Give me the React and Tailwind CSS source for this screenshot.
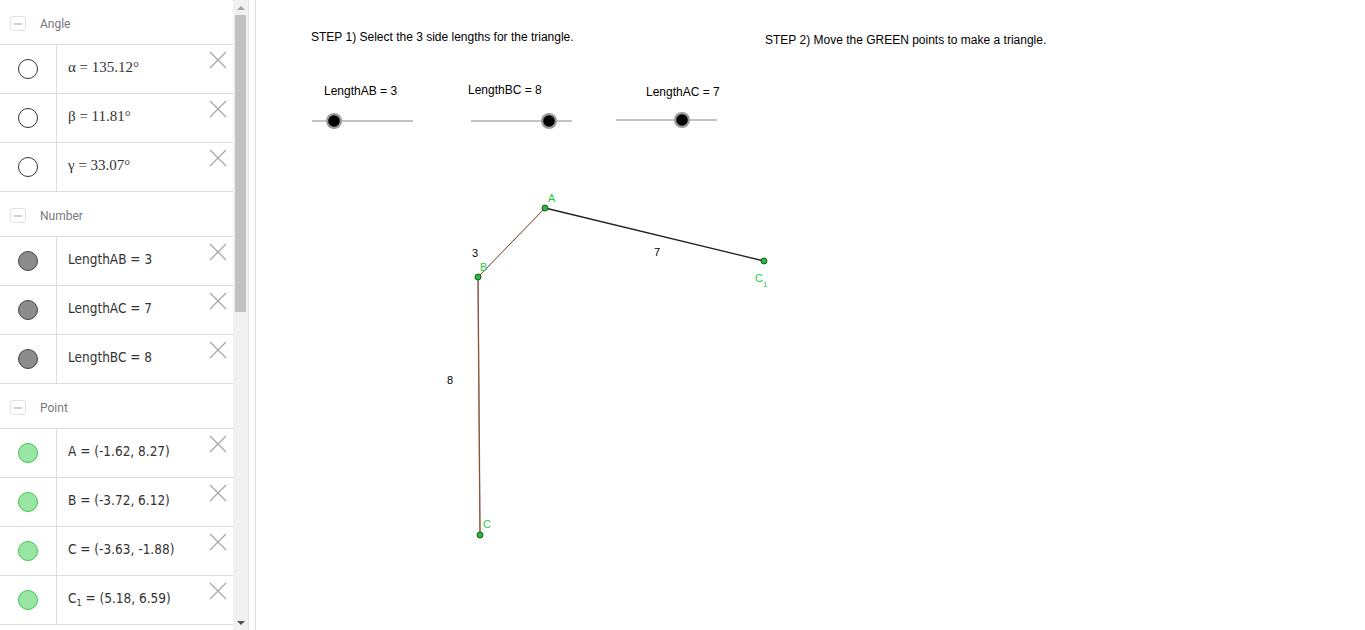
import React from 'react';

const groups = [
  {
    name: 'Angle',
    kind: 'empty',
    serif: true,
    rows: ['α = 135.12°', 'β = 11.81°', 'γ = 33.07°'],
  },
  {
    name: 'Number',
    kind: 'gray',
    rows: ['LengthAB = 3', 'LengthAC = 7', 'LengthBC = 8'],
  },
  {
    name: 'Point',
    kind: 'green',
    rows: ['A = (-1.62, 8.27)', 'B = (-3.72, 6.12)', 'C = (-3.63, -1.88)', 'C1'],
  },
];

const dotClass = {
  empty: 'bg-white border-[#333]',
  gray: 'bg-[#8c8c8c] border-[#444]',
  green: 'bg-[#99e6a4] border-[#3cc84c]',
};

const CloseIcon = () => (
  <svg width="18" height="18" viewBox="0 0 18 18">
    <path d="M1 1 L17 17 M17 1 L1 17" stroke="#a8a8a8" strokeWidth="1.3" />
  </svg>
);

const Row = ({ text, kind, serif }) => (
  <div className="flex h-[49px] border-t border-[#dedede]">
    <div className="w-[56px] flex items-center justify-center">
      <div className={`w-[20px] h-[20px] rounded-full border ${dotClass[kind]}`} />
    </div>
    <div className="flex-1 flex border-l border-[#dedede]">
      <div
        className={`flex-1 flex items-center pl-[11px] pb-[3px] text-[#333] ${
          serif
            ? "font-['Liberation_Serif',serif] text-[15px]"
            : "font-['DejaVu_Sans_Condensed','Liberation_Sans',sans-serif] text-[13.5px]"
        }`}
      >
        {text === 'C1' ? (
          <span>
            C<sub className="text-[9px]">1</sub> = (5.18, 6.59)
          </span>
        ) : (
          text
        )}
      </div>
      <div className="self-start mt-[6px] mr-[6px]">
        <CloseIcon />
      </div>
    </div>
  </div>
);

const Group = ({ g }) => (
  <div className="border-b border-[#dedede]">
    <div className="h-[44px] flex items-center gap-[14px] pl-[10px] pt-[3px]">
      <div className="w-[16px] h-[15px] rounded-[3px] border border-[#e2e2e2] flex items-center justify-center">
        <div className="w-[8px] h-[2px] bg-[#cfcfcf]" />
      </div>
      <span className="text-[12px] text-[#777] font-['Roboto',sans-serif]">{g.name}</span>
    </div>
    {g.rows.map((r) => (
      <Row key={r} text={r} kind={g.kind} serif={g.serif} />
    ))}
  </div>
);

const font = 'Liberation Sans, Arial, sans-serif';

const Slider = ({ x, y, knob, label, lx, ly }) => (
  <g>
    <text x={lx} y={ly} fontSize="12" fontFamily={font} fill="#000">
      {label}
    </text>
    <line x1={x} y1={y} x2={x + 101} y2={y} stroke="#888" strokeWidth="1" />
    <circle cx={knob} cy={y} r="8" fill="#9a9a9a" />
    <circle cx={knob} cy={y} r="5.8" fill="#000" />
  </g>
);

const Point = ({ x, y }) => <circle cx={x} cy={y} r="3" fill="#1fbf3a" stroke="#1a4a1a" strokeWidth="0.9" />;

export default function App() {
  return (
    <div className="w-[1365px] h-[630px] flex bg-white overflow-hidden font-['Liberation_Sans',sans-serif]">
      {/* algebra view */}
      <div className="w-[256px] h-full flex border-r border-[#dcdcdc]">
        <div className="w-[233px] h-full overflow-hidden">
          {groups.map((g) => (
            <Group key={g.name} g={g} />
          ))}
        </div>
        <div className="w-[15px] h-full bg-[#f1f1f1] flex flex-col items-center">
          <div className="h-[15px] flex items-center justify-center">
            <div className="w-0 h-0 border-l-[4px] border-r-[4px] border-b-[4px] border-l-transparent border-r-transparent border-b-[#a3a3a3]" />
          </div>
          <div className="w-[11px] h-[297px] bg-[#c1c1c1]" />
          <div className="flex-1" />
          <div className="h-[15px] flex items-center justify-center">
            <div className="w-0 h-0 border-l-[4px] border-r-[4px] border-t-[4px] border-l-transparent border-r-transparent border-t-[#505050]" />
          </div>
        </div>
        <div className="flex-1 border-l border-[#e4e4e4]" />
      </div>

      {/* graphics view */}
      <div className="flex-1 h-full">
        <svg width="1109" height="630" viewBox="256 0 1109 630">
          <text x="311" y="41" fontSize="12" fontFamily={font} fill="#000">
            STEP 1) Select the 3 side lengths for the triangle.
          </text>
          <text x="765" y="44" fontSize="12" fontFamily={font} fill="#000">
            STEP 2) Move the GREEN points to make a triangle.
          </text>

          <Slider x={312} y={121} knob={334} label="LengthAB = 3" lx={324} ly={95} />
          <Slider x={471} y={121} knob={549} label="LengthBC = 8" lx={468} ly={94} />
          <Slider x={616} y={120} knob={682} label="LengthAC = 7" lx={646} ly={96} />

          <line x1="545" y1="208" x2="764" y2="261" stroke="#222" strokeWidth="1.3" />
          <line x1="545" y1="208" x2="478" y2="277" stroke="#7a3414" strokeWidth="1" />
          <line x1="478" y1="277" x2="480" y2="535" stroke="#8a8a8a" strokeWidth="1.4" />
          <line x1="478" y1="277" x2="480" y2="535" stroke="#9b3a12" strokeWidth="0.8" />

          <Point x={545} y={208} />
          <Point x={478} y={277} />
          <Point x={480} y={535} />
          <Point x={764} y={261} />

          <g fontFamily={font} fontSize="11" fill="#1fcc44">
            <text x="548" y="202">A</text>
            <text x="480" y="271">B</text>
            <text x="483" y="528">C</text>
            <text x="755" y="282">C</text>
            <text x="763" y="287" fontSize="8">1</text>
          </g>
          <g fontFamily={font} fontSize="11" fill="#000">
            <text x="472" y="257">3</text>
            <text x="654" y="256">7</text>
            <text x="447" y="384">8</text>
          </g>
        </svg>
      </div>
    </div>
  );
}
